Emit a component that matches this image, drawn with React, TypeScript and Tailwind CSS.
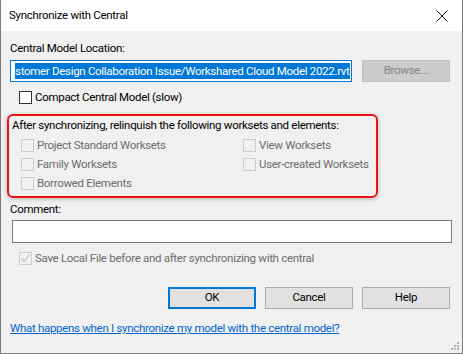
import { ReactElement } from 'react'

const font = { fontFamily: 'Roboto, "Noto Sans", "Liberation Sans", sans-serif' }

const Box = ({ checked, disabled }: { checked?: boolean, disabled?: boolean }): ReactElement => {
  return <span className={`inline-flex w-[13px] h-[13px] shrink-0 items-center justify-center border ${disabled ? 'border-[#cccccc] bg-[#f0f0f0]' : 'border-[#333333] bg-white'}`}>
    {checked && <svg width="11" height="11" viewBox="0 0 11 11"><path d="M1.5 5.5 L4 8.5 L9.5 1.5" fill="none" stroke={disabled ? '#c4c4c4' : '#333'} strokeWidth="1.2" /></svg>}
  </span>
}

const Check = ({ label, checked, disabled }: { label: string, checked?: boolean, disabled?: boolean }): ReactElement => {
  return <div className="flex items-center gap-[3px] h-[13px]">
    <Box checked={checked} disabled={disabled} />
    <span className={`text-[11.5px] tracking-[-0.3px] leading-[15px] whitespace-nowrap ${disabled ? 'text-[#6d6d6d]' : 'text-black'}`}>{label}</span>
  </div>
}

const Button = ({ label, primary }: { label: string, primary?: boolean }): ReactElement => {
  return <button type="button" className={`w-[88px] h-[22px] bg-[#e1e1e1] text-[11.5px] tracking-[-0.3px] text-black leading-none ${primary ? 'border-2 border-[#0078d7]' : 'border border-[#adadad]'}`}>{label}</button>
}

export default function App(): ReactElement {
  return <div className="w-[463px] h-[354px] flex flex-col bg-[#f0f0f0] border-x border-b border-[#7a7a7a] overflow-hidden" style={font}>
    <div className="h-[31px] shrink-0 bg-white flex items-center justify-between pl-[8px] pr-[12px]">
      <span className="text-[11.5px] tracking-[-0.3px] text-black">Synchronize with Central</span>
      <svg width="16" height="16" viewBox="0 0 16 16"><path d="M2.5 2.5 L13.5 13.5 M13.5 2.5 L2.5 13.5" stroke="#111" strokeWidth="1" /></svg>
    </div>

    <div className="flex flex-col px-[9px] text-[11.5px] tracking-[-0.3px]">
      <div className="mt-[10px] leading-[15px] text-black">Central Model Location:</div>
      <div className="mt-[4px] flex items-center gap-[10px]">
        <div className="w-[342px] h-[22px] border border-[#0078d7] bg-white flex items-center overflow-hidden pl-[4px]">
          <span className="bg-[#0078d7] text-white leading-[16px] whitespace-nowrap">stomer Design Collaboration Issue/Workshared Cloud Model 2022.rvt</span>
        </div>
        <button type="button" disabled className="w-[88px] h-[22px] bg-[#cccccc] border border-[#bfbfbf] text-[#838383] leading-none">Browse...</button>
      </div>
      <div className="mt-[9px] pl-[9px]">
        <Check label="Compact Central Model (slow)" />
      </div>

      <div className="mt-[10px] -ml-[3px] w-[371px] h-[84px] border-2 border-[#ee1111] rounded-[6px] shadow-[0_1px_4px_rgba(0,0,0,0.25)] px-[3px] pt-[2px]">
        <div className="leading-[15px] text-black whitespace-nowrap">After synchronizing, relinquish the following worksets and elements:</div>
        <div className="mt-[6px] pl-[9px] grid grid-cols-[222px_1fr] gap-y-[6px]">
          <Check label="Project Standard Worksets" disabled />
          <Check label="View Worksets" disabled />
          <Check label="Family Worksets" disabled />
          <Check label="User-created Worksets" disabled />
          <Check label="Borrowed Elements" disabled />
        </div>
      </div>

      <div className="mt-[4px] leading-[15px] text-black">Comment:</div>
      <div className="mt-[3px] ml-[2px] w-[440px] h-[23px] bg-white border border-[#7a7a7a]" />
      <div className="mt-[9px] pl-[9px]">
        <Check label="Save Local File before and after synchronizing with central" checked disabled />
      </div>

      <div className="mt-[22px] flex justify-end gap-[9px] pr-[3px]">
        <Button label="OK" primary />
        <Button label="Cancel" />
        <Button label="Help" />
      </div>

      <a href="#" className="mt-[12px] leading-[15px] text-[#0066cc] underline whitespace-nowrap">What happens when I synchronize my model with the central model?</a>
    </div>
    <div className="mt-auto flex justify-end pr-[2px] pb-[2px]">
      <svg width="9" height="9" viewBox="0 0 9 9" fill="#b4b4b4">
        <rect x="6" y="0" width="2" height="2" />
        <rect x="3" y="3" width="2" height="2" />
        <rect x="6" y="3" width="2" height="2" />
        <rect x="0" y="6" width="2" height="2" />
        <rect x="3" y="6" width="2" height="2" />
        <rect x="6" y="6" width="2" height="2" />
      </svg>
    </div>
  </div>
}
